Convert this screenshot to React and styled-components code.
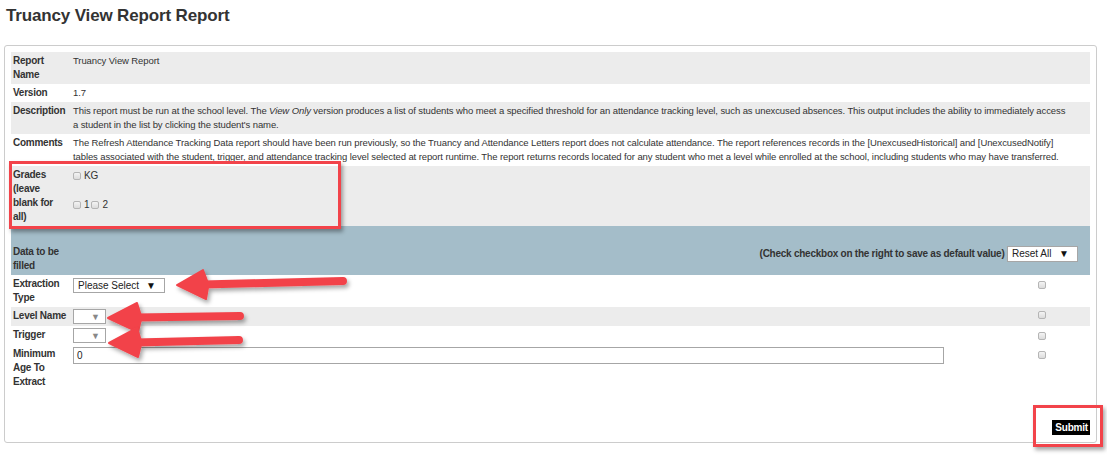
import React from "react";
import styled, { createGlobalStyle } from "styled-components";

const Global = createGlobalStyle`
  html, body { margin: 0; padding: 0; background: #fff; }
  body { font-family: "Liberation Sans", Arial, sans-serif; color: #333; }
`;

const Page = styled.div`
  position: relative;
  width: 1107px;
  height: 456px;
  overflow: hidden;
`;

const Title = styled.h1`
  margin: 0;
  padding: 6px 0 0 6px;
  height: 45px;
  box-sizing: border-box;
  font-size: 17px;
  letter-spacing: -0.15px;
  line-height: 20px;
  font-weight: bold;
  color: #333;
`;

const Panel = styled.div`
  margin: 0 10px 0 4px;
  border: 1px solid #ccc;
  border-radius: 3px;
  padding: 6px 6px 6px 6px;
  height: 398px;
  box-sizing: border-box;
  display: flex;
  flex-direction: column;
`;

const Table = styled.table`
  width: 100%;
  border-collapse: collapse;
  font-size: 9.5px;
  letter-spacing: -0.1px;
  line-height: 14px;
  color: #333;
`;

const Row = styled.tr`
  background: ${(p) => (p.$shade ? "#ececec" : "#fff")};
`;

const HeadRow = styled.tr`
  background: #a4bdc9;
`;

const Label = styled.th`
  width: 54px;
  padding: 2px 4px 2px 2px;
  text-align: left;
  vertical-align: top;
  font-weight: bold;
  font-size: 10px;
  letter-spacing: -0.25px;
`;

const Value = styled.td`
  padding: ${(p) => p.$pt ?? 2}px 2px 2px 2px;
  vertical-align: top;
`;

const CheckCell = styled.td`
  width: 50px;
  padding: ${(p) => p.$pt ?? 3}px 2px 2px 6px;
  vertical-align: top;
`;

const HeadLabel = styled.th`
  padding: 19px 4px 2px 2px;
  text-align: left;
  vertical-align: top;
  font-weight: bold;
  font-size: 10px;
  letter-spacing: -0.25px;
`;

const HeadRight = styled.td`
  padding: 20px 12px 2px 2px;
  text-align: right;
  vertical-align: top;
  font-weight: bold;
  font-size: 10px;
  letter-spacing: -0.25px;
`;

const Box = styled.span`
  display: inline-block;
  width: 8px;
  height: 8px;
  box-sizing: border-box;
  border: 1px solid #b5b5b5;
  border-radius: 2px;
  background: linear-gradient(#f4f4f4, #dcdcdc);
  vertical-align: -1px;
  margin-right: ${(p) => p.$mr ?? 3}px;
`;

const GradeList = styled.div`
  display: flex;
  flex-direction: column;
  gap: 15px;
  padding-top: 1px;
`;

const GradeLine = styled.div`
  display: flex;
  align-items: center;
`;

const GradeText = styled.span`
  margin-right: 2px;
  font-size: 10px;
`;

const Select = styled.span`
  display: inline-flex;
  align-items: center;
  justify-content: ${(p) => (p.$empty ? "center" : "space-between")};
  box-sizing: border-box;
  width: ${(p) => p.$w}px;
  height: ${(p) => p.$h || 15}px;
  border: 1px solid #a6a6a6;
  background: #fff;
  padding: 0 ${(p) => (p.$empty ? 0 : 8)}px 0 4px;
  font-weight: normal;
  color: #222;
  font-size: 10px;
  letter-spacing: 0;
  text-align: left;
  vertical-align: middle;
`;

const Arrow = styled.span`
  font-size: ${(p) => (p.$muted ? 9 : 10)}px;
  line-height: 10px;
  color: ${(p) => (p.$muted ? "#888" : "#111")};
  padding-left: ${(p) => (p.$empty ? 8 : 0)}px;
`;

const TextInput = styled.div`
  box-sizing: border-box;
  width: 871px;
  height: 17px;
  border: 1px solid #a6a6a6;
  padding: 1px 3px;
  font-size: 10px;
  line-height: 13px;
  color: #222;
`;

const Footer = styled.div`
  margin-top: auto;
  display: flex;
  justify-content: flex-end;
`;

const Submit = styled.button`
  background: #000;
  color: #fff;
  border: none;
  font-family: "Liberation Sans", Arial, sans-serif;
  font-weight: bold;
  font-size: 10px;
  letter-spacing: -0.2px;
  line-height: 13px;
  padding: 1px 2px 1px 3px;
  height: 15px;
  margin: 0 0 1px 0;
  cursor: pointer;
`;

const Callout = styled.div`
  position: absolute;
  left: ${(p) => p.$x}px;
  top: ${(p) => p.$y}px;
  width: ${(p) => p.$w}px;
  height: ${(p) => p.$h}px;
  box-sizing: border-box;
  border: 3px solid #f2434a;
  box-shadow: 2px 3px 4px rgba(0, 0, 0, 0.35);
  pointer-events: none;
`;

const Overlay = styled.svg`
  position: absolute;
  left: 0;
  top: 0;
  width: 1107px;
  height: 456px;
  pointer-events: none;
`;

const ArrowShape = ({ tip, top, bot, tail }) => {
  const bx = (top[0] + bot[0]) / 2 - 2;
  const by = (top[1] + bot[1]) / 2;
  return (
    <g filter="url(#sh)">
      <line x1={bx} y1={by} x2={tail[0]} y2={tail[1]} stroke="#f2434a" strokeWidth="8" strokeLinecap="round" />
      <polygon
        points={`${tip[0]},${tip[1]} ${top[0]},${top[1]} ${bx + 6},${by} ${bot[0]},${bot[1]}`}
        fill="#f2434a"
        stroke="#f2434a"
        strokeWidth="2"
        strokeLinejoin="round"
      />
    </g>
  );
};

export default function App() {
  return (
    <Page>
      <Global />
      <Title>Truancy View Report Report</Title>
      <Panel>
        <Table>
          <tbody>
            <Row $shade>
              <Label>Report Name</Label>
              <Value colSpan={2}>Truancy View Report</Value>
            </Row>
            <Row>
              <Label>Version</Label>
              <Value colSpan={2}>1.7</Value>
            </Row>
            <Row $shade>
              <Label>Description</Label>
              <Value colSpan={2}>
                This report must be run at the school level. The <i>View Only</i> version produces a list of students who meet a specified threshold for an attendance tracking level, such as unexcused absences. This output includes the ability to immediately access
                <br />
                a student in the list by clicking the student's name.
              </Value>
            </Row>
            <Row>
              <Label>Comments</Label>
              <Value colSpan={2}>
                The Refresh Attendance Tracking Data report should have been run previously, so the Truancy and Attendance Letters report does not calculate attendance. The report references records in the [UnexcusedHistorical] and [UnexcusedNotify]
                <br />
                tables associated with the student, trigger, and attendance tracking level selected at report runtime. The report returns records located for any student who met a level while enrolled at the school, including students who may have transferred.
              </Value>
            </Row>
            <Row $shade>
              <Label>Grades (leave blank for all)</Label>
              <Value colSpan={2}>
                <GradeList>
                  <GradeLine>
                    <Box />
                    <GradeText>KG</GradeText>
                  </GradeLine>
                  <GradeLine>
                    <Box />
                    <GradeText>1</GradeText>
                    <Box />
                    <GradeText>2</GradeText>
                  </GradeLine>
                </GradeList>
              </Value>
            </Row>
            <HeadRow>
              <HeadLabel>Data to be filled</HeadLabel>
              <HeadRight colSpan={2}>
                (Check checkbox on the right to save as default value){" "}
                <Select $w={71} $h={16}>
                  Reset All <Arrow>▼</Arrow>
                </Select>
              </HeadRight>
            </HeadRow>
            <Row>
              <Label>Extraction Type</Label>
              <Value $pt={3}>
                <Select $w={92}>
                  Please Select <Arrow>▼</Arrow>
                </Select>
              </Value>
              <CheckCell $pt={3}>
                <Box />
              </CheckCell>
            </Row>
            <Row $shade>
              <Label>Level Name</Label>
              <Value>
                <Select $w={33} $h={15} $empty>
                  <Arrow $muted $empty>▼</Arrow>
                </Select>
              </Value>
              <CheckCell $pt={1}>
                <Box />
              </CheckCell>
            </Row>
            <Row>
              <Label>Trigger</Label>
              <Value>
                <Select $w={33} $h={15} $empty>
                  <Arrow $muted $empty>▼</Arrow>
                </Select>
              </Value>
              <CheckCell $pt={3}>
                <Box />
              </CheckCell>
            </Row>
            <Row>
              <Label>Minimum Age To Extract</Label>
              <Value>
                <TextInput>0</TextInput>
              </Value>
              <CheckCell $pt={3}>
                <Box />
              </CheckCell>
            </Row>
          </tbody>
        </Table>
        <Footer>
          <Submit>Submit</Submit>
        </Footer>
      </Panel>

      <Callout $x={9} $y={161} $w={332} $h={68} />
      <Callout $x={1033} $y={405} $w={70} $h={42} />

      <Overlay viewBox="0 0 1107 456">
        <defs>
          <filter id="sh" x="-10%" y="-30%" width="130%" height="180%">
            <feDropShadow dx="2" dy="3" stdDeviation="2" floodColor="#000" floodOpacity="0.35" />
          </filter>
        </defs>
        <ArrowShape tip={[177, 285]} top={[203, 270]} bot={[206, 299]} tail={[343, 281]} />
        <ArrowShape tip={[108, 318]} top={[137, 303]} bot={[138, 332]} tail={[240, 316]} />
        <ArrowShape tip={[109, 343]} top={[137, 328]} bot={[138, 357]} tail={[239, 340]} />
      </Overlay>
    </Page>
  );
}
